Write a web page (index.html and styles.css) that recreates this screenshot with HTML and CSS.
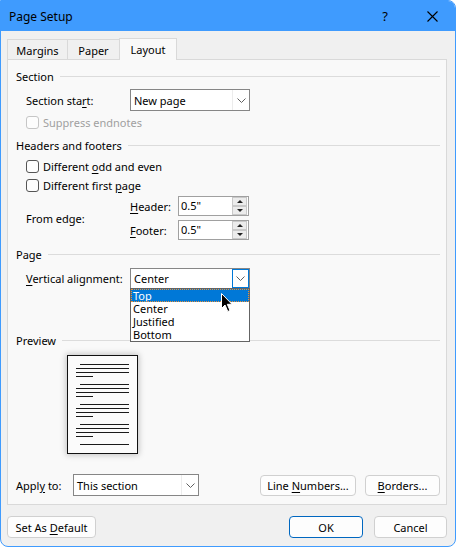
FILE: index.html
```html
<!DOCTYPE html>
<html lang="en">
<head>
    <meta charset="UTF-8">
    <title>Page Setup</title>
    <link rel="stylesheet" href="styles.css">
</head>
<body>
    <div class="window">
        <div class="titlebar">
            <span class="title">Page Setup</span>
            <span class="help">?</span>
            <span class="close">
                <svg width="11" height="11" viewBox="0 0 11 11"><path d="M0.5 0.5 L10.5 10.5 M10.5 0.5 L0.5 10.5" stroke="#000" stroke-width="1.1" fill="none"/></svg>
            </span>
        </div>

        <div class="tabs">
            <div class="tab">Margins</div>
            <div class="tab">Paper</div>
            <div class="tab active">Layout</div>
        </div>

        <div class="panel">
            <div class="group-title"><span>Section</span></div>
            <div class="row row-select">
                <span class="row-label">Section sta<u>r</u>t:</span>
                <div class="select">
                    <span class="select-text">New page</span>
                    <span class="select-arrow"><svg width="9" height="5" viewBox="0 0 9 5"><polyline points="0.5,0.5 4.5,4.5 8.5,0.5" stroke="#606060" fill="none"/></svg></span>
                </div>
            </div>
            <div class="row check disabled row-suppress">
                <span class="box"></span><span>Suppress endnotes</span>
            </div>

            <div class="group-title gap-title"><span>Headers and footers</span></div>
            <div class="row check row-odd">
                <span class="box"></span><span>Different <u>o</u>dd and even</span>
            </div>
            <div class="row check">
                <span class="box"></span><span>Different first <u>p</u>age</span>
            </div>
            <div class="row edge">
                <span class="row-label">From edge:</span>
                <div class="edge-grid">
                    <span class="edge-label"><u>H</u>eader:</span>
                    <div class="spin">
                        <span class="spin-value">0.5"</span>
                        <span class="spin-btns"><span class="spin-btn up"></span><span class="spin-btn down"></span></span>
                    </div>
                    <span class="edge-label"><u>F</u>ooter:</span>
                    <div class="spin">
                        <span class="spin-value">0.5"</span>
                        <span class="spin-btns"><span class="spin-btn up"></span><span class="spin-btn down"></span></span>
                    </div>
                </div>
            </div>

            <div class="group-title gap-title"><span>Page</span></div>
            <div class="row row-valign">
                <span class="row-label"><u>V</u>ertical alignment:</span>
                <div class="select focused">
                    <span class="select-text">Center</span>
                    <span class="select-arrow"><svg width="9" height="5" viewBox="0 0 9 5"><polyline points="0.5,0.5 4.5,4.5 8.5,0.5" stroke="#606060" fill="none"/></svg></span>
                    <div class="dropdown">
                        <div class="option selected">Top</div>
                        <div class="option">Center</div>
                        <div class="option">Justified</div>
                        <div class="option">Bottom</div>
                        <svg class="cursor" width="13" height="20" viewBox="0 0 13 20"><path d="M0.5 0.5 L0.5 15.5 L4 12 L6.8 18.5 L9 17.5 L6.3 11.3 L11 11.3 Z" fill="#000" stroke="#fff" stroke-width="1"/></svg>
                    </div>
                </div>
            </div>

            <div class="group-title preview-title"><span>Preview</span></div>
            <div class="preview">
                <div class="page">
                    <svg width="71" height="99" viewBox="0 0 71 99">
                        <rect x="0.5" y="0.5" width="70" height="98" fill="#fbfbfb" stroke="#111"/>
                        <g stroke="#1a1a1a" stroke-width="1">
                            <path d="M13 9.5 H62 M9 13.5 H62 M9 17.5 H62 M9 21.5 H26"/>
                            <path d="M13 29.5 H62 M9 33.5 H62 M9 37.5 H62 M9 41.5 H26"/>
                            <path d="M13 49.5 H62 M9 53.5 H62 M9 57.5 H62 M9 61.5 H26"/>
                            <path d="M13 69.5 H62 M9 73.5 H62 M9 77.5 H62 M9 81.5 H26"/>
                            <path d="M13 89.5 H62"/>
                        </g>
                    </svg>
                </div>
            </div>

            <div class="bottom-row">
                <span class="apply-label">Appl<u>y</u> to:</span>
                <div class="select select-wide">
                    <span class="select-text">This section</span>
                    <span class="select-arrow"><svg width="9" height="5" viewBox="0 0 9 5"><polyline points="0.5,0.5 4.5,4.5 8.5,0.5" stroke="#606060" fill="none"/></svg></span>
                </div>
                <button class="btn btn-lines">Line <u>N</u>umbers...</button>
                <button class="btn btn-borders"><u>B</u>orders...</button>
            </div>
        </div>

        <div class="footer">
            <button class="btn btn-default">Set As <u>D</u>efault</button>
            <button class="btn btn-ok">OK</button>
            <button class="btn btn-cancel">Cancel</button>
        </div>
    </div>
</body>
</html>
```

FILE: styles.css
```css
body {
    margin: 0;
    font-family: "Noto Sans", "Open Sans", sans-serif;
    font-size: 11px;
    color: #000;
    background: #fff;
}
u {
    text-decoration-thickness: 1px;
    text-underline-offset: 2px;
}
.window {
    width: 456px;
    height: 547px;
    box-sizing: border-box;
    border: 1px solid #3f9bfe;
    border-radius: 0 8px 8px 8px;
    background: #f0f0f0;
    overflow: hidden;
}
.titlebar {
    height: 30px;
    background: #3f9bfe;
    display: flex;
    align-items: center;
}
.title {
    padding-left: 8px;
    font-size: 12px;
}
.help {
    margin-left: auto;
    width: 48px;
    text-align: center;
    font-size: 13px;
}
.close {
    width: 46px;
    display: flex;
    justify-content: center;
}
.tabs {
    display: flex;
    align-items: flex-end;
    height: 21px;
    margin: 7px 0 0 6px;
}
.tab {
    box-sizing: border-box;
    height: 20px;
    border: 1px solid #d9d9d9;
    border-bottom: none;
    line-height: 21px;
    text-align: center;
}
.tab + .tab {
    margin-left: -1px;
}
.tab:nth-child(1) { width: 61px; }
.tab:nth-child(2) { width: 53px; }
.tab.active {
    width: 58px;
    height: 22px;
    margin-bottom: -1px;
    background: #f9f9f9;
    position: relative;
    z-index: 1;
    line-height: 21px;
}
.panel {
    width: 440px;
    box-sizing: border-box;
    margin-left: 6px;
    padding: 8px 6px 8px 8px;
    background: #f9f9f9;
    border: 1px solid #d9d9d9;
}
.group-title {
    display: flex;
    align-items: center;
    height: 16px;
}
.group-title::after {
    content: "";
    flex: 1;
    height: 1px;
    margin-left: 6px;
    background: #dcdcdc;
}
.gap-title {
    margin-top: 6px;
}
.preview-title {
    margin-top: 43px;
}
.row {
    display: flex;
    align-items: center;
    padding-left: 10px;
}
.row-label {
    width: 104px;
}
.row-select {
    margin-top: 5px;
}
.row-valign {
    margin-top: 6px;
}
.select {
    position: relative;
    box-sizing: border-box;
    width: 120px;
    height: 22px;
    display: flex;
    align-items: center;
    border: 1px solid #868686;
    background: #fff;
}
.row-valign .select {
    height: 21px;
}
.select-text {
    flex: 1;
    padding-left: 3px;
}
.select-arrow {
    box-sizing: border-box;
    width: 17px;
    height: 100%;
    display: flex;
    align-items: center;
    justify-content: center;
    border-left: 1px solid #ececec;
}
.select.focused .select-arrow {
    border: 1px solid #0078d7;
}
.select-wide {
    width: 126px;
}
.dropdown {
    position: absolute;
    top: 100%;
    left: -1px;
    width: 120px;
    box-sizing: border-box;
    border: 1px solid #646464;
    background: #fff;
    z-index: 2;
}
.option {
    height: 13px;
    line-height: 13px;
    padding-left: 2px;
}
.option.selected {
    background: #0078d7;
    color: #fff;
    outline: 1px dotted #e8923a;
    outline-offset: -1px;
}
.cursor {
    position: absolute;
    left: 90px;
    top: 4px;
}
.check {
    height: 18px;
}
.row-suppress {
    margin-top: 2px;
}
.row-odd {
    margin-top: 4px;
}
.check + .check {
    margin-top: 1px;
}
.box {
    box-sizing: border-box;
    width: 13px;
    height: 13px;
    margin-right: 4px;
    border: 1px solid #555;
    border-radius: 3px;
    background: #fdfdfd;
}
.disabled {
    color: #a0a0a0;
}
.disabled .box {
    border-color: #c6c6c6;
}
.edge {
    margin-top: 2px;
}
.edge-grid {
    display: grid;
    grid-template-columns: 48px 71px;
    grid-template-rows: 20px 20px;
    row-gap: 4px;
    align-items: center;
}
.spin {
    box-sizing: border-box;
    height: 20px;
    display: flex;
    border: 1px solid #a0a0a0;
    background: #fff;
}
.spin-value {
    flex: 1;
    padding-left: 2px;
    line-height: 18px;
}
.spin-btns {
    width: 15px;
    display: flex;
    flex-direction: column;
    margin-right: 1px;
}
.spin-btn {
    flex: 1;
    box-sizing: border-box;
    border: 1px solid #c9c9c9;
    background: #ececec;
    display: flex;
    align-items: center;
    justify-content: center;
}
.spin-btn.up::before {
    content: "";
    border-left: 3px solid transparent;
    border-right: 3px solid transparent;
    border-bottom: 3px solid #222;
}
.spin-btn.down::before {
    content: "";
    border-left: 3px solid transparent;
    border-right: 3px solid transparent;
    border-top: 3px solid #222;
}
.preview {
    margin-top: 7px;
    padding-left: 51px;
}
.page {
    width: 71px;
    height: 99px;
    box-shadow: 0 0 6px 1px rgba(0, 0, 0, 0.22);
}
.page svg {
    display: block;
}
.bottom-row {
    display: flex;
    align-items: center;
    margin-top: 20px;
}
.apply-label {
    width: 57px;
}
.btn {
    box-sizing: border-box;
    height: 21px;
    padding: 0;
    font-family: inherit;
    font-size: 11px;
    color: #000;
    background: #fdfdfd;
    border: 1px solid #d0d0d0;
    border-radius: 4px;
}
.btn-lines {
    width: 96px;
    margin-left: auto;
}
.btn-borders {
    width: 75px;
    margin-left: 9px;
}
.footer {
    display: flex;
    margin-top: 11px;
    padding: 0 8px 0 6px;
}
.footer .btn {
    height: 22px;
}
.btn-default {
    width: 89px;
}
.btn-ok {
    width: 74px;
    margin-left: auto;
    border-color: #0067c0;
}
.btn-cancel {
    width: 73px;
    margin-left: 11px;
}
```
